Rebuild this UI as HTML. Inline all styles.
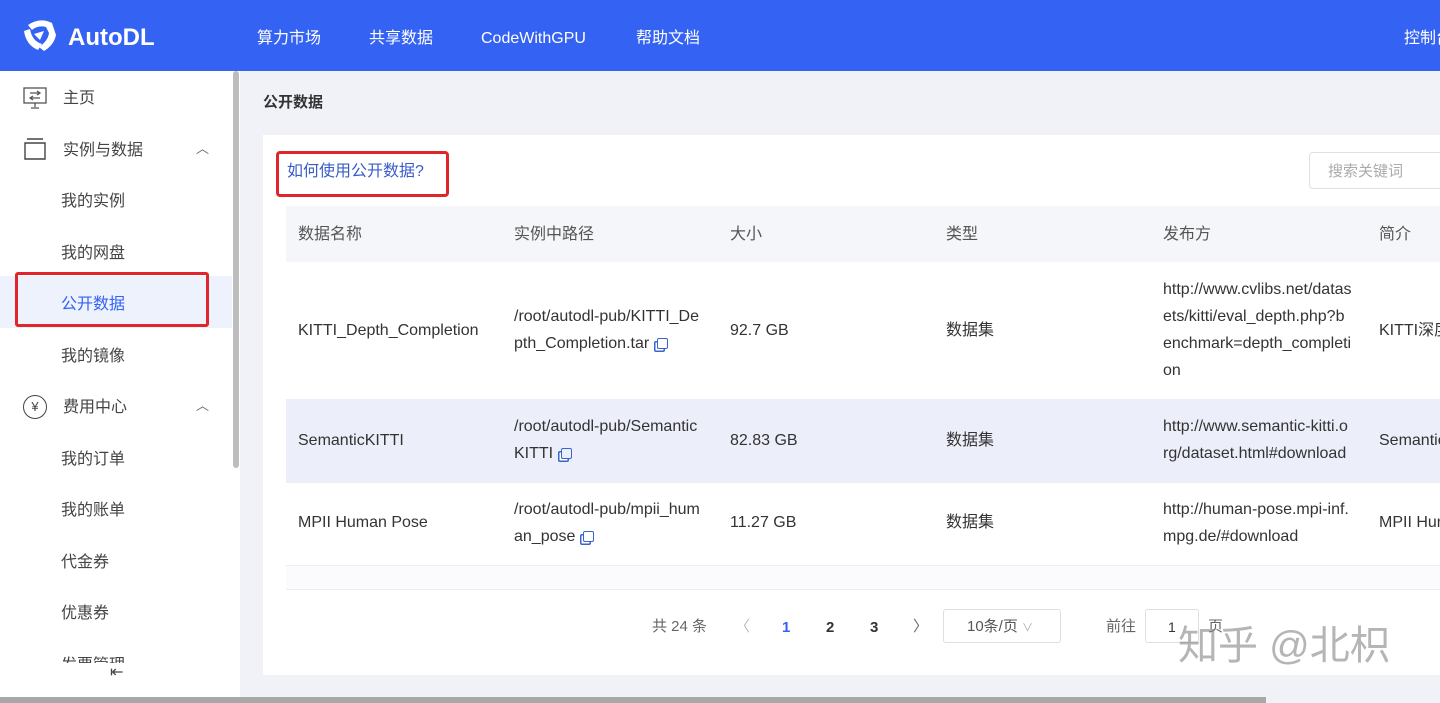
<!DOCTYPE html><html><head><meta charset="utf-8"><style>
*{margin:0;padding:0;box-sizing:border-box}
body{width:1440px;height:703px;overflow:hidden;position:relative;background:#f0f2f7;font-family:"Liberation Sans","Noto Sans CJK SC",sans-serif;color:#333}
.a{position:absolute;white-space:nowrap;line-height:1.4}
.hd{left:0;top:0;width:1440px;height:71px;background:#3462f3;color:#fff}
.nav{font-size:16px;top:28px;color:#fff}
.side{left:0;top:71px;width:240px;height:632px;background:#fff}
.si{font-size:16px;color:#444}
.t{font-size:16px;color:#333;line-height:27px;white-space:nowrap}
.bx{line-height:1.15}
.cp{display:inline-block;width:11px;height:11px;border:1.5px solid #3a64c8;border-radius:2px;margin-left:8px;vertical-align:middle;box-shadow:-3px 3px 0 -1.5px #fff,-3px 3px 0 0 #3a64c8}
</style></head><body>
<div class="a hd">
<svg class="a" style="left:22px;top:17px" width="36" height="36" viewBox="0 0 36 36"><path d="M6 8 Q18 0 30 6 L34 18 Q32 28 22 34 L17 30 Q26 24 27 16 L24 10 Q16 8 10 13 Z" fill="#fff"/><path d="M2 14 L8 12 Q10 24 20 27 L16 33 Q4 28 2 14 Z" fill="#fff"/><path d="M12 17 L22 14 L18 23 Z" fill="#fff"/></svg>
<div class="a" style="left:68px;top:21px;font-size:24px;font-weight:bold">AutoDL</div>
<div class="a nav" style="left:257px">算力市场</div>
<div class="a nav" style="left:369px">共享数据</div>
<div class="a nav" style="left:481px">CodeWithGPU</div>
<div class="a nav" style="left:636px">帮助文档</div>
<div class="a nav" style="left:1404px">控制台</div>
</div>
<div class="a side">
<svg class="a" style="left:23px;top:16px" width="24" height="22" viewBox="0 0 24 22" fill="none" stroke="#555" stroke-width="1.3"><rect x="1" y="1" width="22" height="15"/><path d="M7 6h10M14 4l3 2-3 2M17 11H7M10 9l-3 2 3 2M12 16v4M8 21h8"/></svg>
<div class="a si" style="left:63px;top:17px">主页</div>
<svg class="a" style="left:23px;top:67px" width="24" height="22" viewBox="0 0 24 22" fill="none" stroke="#444" stroke-width="1.4"><path d="M4 1h16M2 5h20v16H2z"/></svg>
<div class="a si" style="left:63px;top:69px">实例与数据</div>
<div class="a" style="left:196px;top:69px;font-size:13px;color:#666">︿</div>
<div class="a si" style="left:61px;top:120px">我的实例</div>
<div class="a si" style="left:61px;top:172px">我的网盘</div>
<div class="a" style="left:0;top:205px;width:232px;height:52px;background:#edf2fd"></div>
<div class="a" style="left:15px;top:201px;width:194px;height:55px;border:3px solid #e0262b;border-radius:3px"></div>
<div class="a si" style="left:61px;top:223px;color:#3462f3">公开数据</div>
<div class="a si" style="left:61px;top:275px">我的镜像</div>
<div class="a" style="left:23px;top:324px;width:24px;height:24px;border:1.4px solid #444;border-radius:50%;font-size:13px;text-align:center;line-height:21px;color:#444">¥</div>
<div class="a si" style="left:63px;top:326px">费用中心</div>
<div class="a" style="left:196px;top:326px;font-size:13px;color:#666">︿</div>
<div class="a si" style="left:61px;top:378px">我的订单</div>
<div class="a si" style="left:61px;top:429px">我的账单</div>
<div class="a si" style="left:61px;top:481px">代金券</div>
<div class="a si" style="left:61px;top:532px">优惠券</div>
<div class="a si" style="left:61px;top:584px;height:8px;overflow:hidden">发票管理</div>
<div class="a" style="left:110px;top:591px;font-size:16px;color:#444">⇤</div>
<div class="a" style="left:233px;top:0;width:6px;height:397px;background:#bdbdbd;border-radius:3px"></div>
</div>
<div class="a" style="left:263px;top:92px;font-size:15px;font-weight:bold;color:#333">公开数据</div>
<div class="a" style="left:263px;top:135px;width:1177px;height:540px;background:#fff"></div>
<div class="a" style="left:276px;top:151px;width:173px;height:46px;border:3px solid #e0262b;border-radius:4px"></div>
<div class="a" style="left:287px;top:161px;font-size:16px;color:#3a5cc8">如何使用公开数据?</div>
<div class="a bx" style="left:1309px;top:152px;width:140px;height:37px;border:1px solid #dcdfe6;border-radius:4px;font-size:15px;color:#aaa;padding:10px 18px">搜索关键词</div>
<div class="a" style="left:286px;top:206px;width:1154px;height:56px;background:#f5f6f9"></div>
<div class="a" style="left:286px;top:399px;width:1154px;height:83px;background:#eceef9"></div>
<div class="a" style="left:286px;top:482px;width:1154px;height:1px;background:#ebeef5"></div>
<div class="a" style="left:286px;top:565px;width:1154px;height:1px;background:#ebeef5"></div>
<div class="a" style="left:286px;top:589px;width:1154px;height:1px;background:#ebeef5"></div>
<div class="a" style="left:286px;top:566px;width:1154px;height:23px;background:#fbfbfd"></div>
<div class="a" style="left:298px;top:224px;font-size:16px;color:#555">数据名称</div>
<div class="a" style="left:514px;top:224px;font-size:16px;color:#555">实例中路径</div>
<div class="a" style="left:730px;top:224px;font-size:16px;color:#555">大小</div>
<div class="a" style="left:946px;top:224px;font-size:16px;color:#555">类型</div>
<div class="a" style="left:1163px;top:224px;font-size:16px;color:#555">发布方</div>
<div class="a" style="left:1379px;top:224px;font-size:16px;color:#555">简介</div>

<div class="a t" style="left:298px;top:317px">KITTI_Depth_Completion</div>
<div class="a t" style="left:514px;top:303px">/root/autodl-pub/KITTI_De<br>pth_Completion.tar<span class="cp"></span></div>
<div class="a t" style="left:730px;top:317px">92.7 GB</div>
<div class="a t" style="left:946px;top:317px">数据集</div>
<div class="a t" style="left:1163px;top:276px">http://www.cvlibs.net/datas<br>ets/kitti/eval_depth.php?b<br>enchmark=depth_completi<br>on</div>
<div class="a t" style="left:1379px;top:317px">KITTI深度</div>

<div class="a t" style="left:298px;top:427px">SemanticKITTI</div>
<div class="a t" style="left:514px;top:413px">/root/autodl-pub/Semantic<br>KITTI<span class="cp"></span></div>
<div class="a t" style="left:730px;top:427px">82.83 GB</div>
<div class="a t" style="left:946px;top:427px">数据集</div>
<div class="a t" style="left:1163px;top:413px">http://www.semantic-kitti.o<br>rg/dataset.html#download</div>
<div class="a t" style="left:1379px;top:427px">Semantic</div>

<div class="a t" style="left:298px;top:509px">MPII Human Pose</div>
<div class="a t" style="left:514px;top:496px">/root/autodl-pub/mpii_hum<br>an_pose<span class="cp"></span></div>
<div class="a t" style="left:730px;top:509px">11.27 GB</div>
<div class="a t" style="left:946px;top:509px">数据集</div>
<div class="a t" style="left:1163px;top:496px">http://human-pose.mpi-inf.<br>mpg.de/#download</div>
<div class="a t" style="left:1379px;top:509px">MPII Hum</div>

<div class="a" style="left:652px;top:616px;font-size:15px;color:#666">共 24 条</div>
<div class="a" style="left:735px;top:616px;font-size:15px;color:#bbb">〈</div>
<div class="a" style="left:782px;top:617px;font-size:15px;color:#3462f3;font-weight:bold">1</div>
<div class="a" style="left:826px;top:617px;font-size:15px;font-weight:bold">2</div>
<div class="a" style="left:870px;top:617px;font-size:15px;font-weight:bold">3</div>
<div class="a" style="left:913px;top:616px;font-size:15px;color:#666">〉</div>
<div class="a bx" style="left:943px;top:609px;width:118px;height:34px;border:1px solid #dcdfe6;border-radius:3px;font-size:15px;color:#555;padding:8px 23px">10条/页 <span style="color:#aaa;font-size:11px">∨</span></div>
<div class="a" style="left:1106px;top:616px;font-size:15px;color:#666">前往</div>
<div class="a bx" style="left:1145px;top:609px;width:54px;height:34px;border:1px solid #dcdfe6;border-radius:3px;font-size:14px;padding:9px 22px">1</div>
<div class="a" style="left:1208px;top:616px;font-size:15px;color:#666">页</div>
<div class="a" style="left:1178px;top:618px;font-size:40px;color:rgba(120,120,120,.55)">知乎 @北枳</div>
<div class="a" style="left:0;top:697px;width:1266px;height:6px;background:#a8a8a8"></div>
</body></html>
